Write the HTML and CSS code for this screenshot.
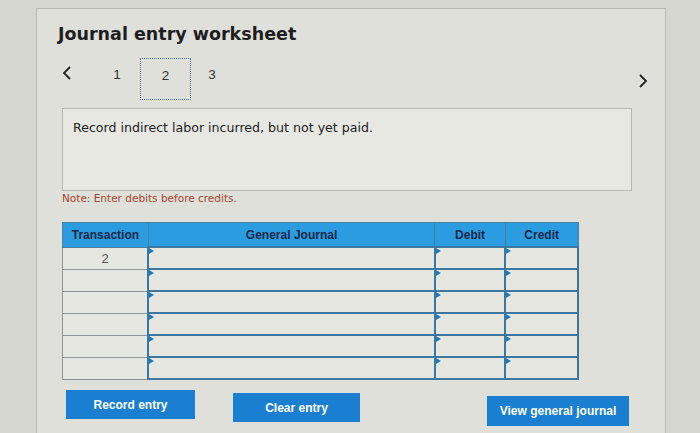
FILE: index.html
```html
<!DOCTYPE html>
<html>
<head>
<meta charset="utf-8">
<link rel="stylesheet" href="styles.css">
</head>
<body>
<div class="panel">
  <h1 class="title">Journal entry worksheet</h1>
  <div class="nav">
    <svg class="chev prev" width="10" height="14" viewBox="0 0 10 14"><polyline points="8,1 2,7 8,13" fill="none" stroke="#222" stroke-width="1.8"/></svg>
    <span class="step">1</span>
    <span class="step current">2</span>
    <span class="step">3</span>
    <svg class="chev next" width="10" height="14" viewBox="0 0 10 14"><polyline points="2,1 8,7 2,13" fill="none" stroke="#222" stroke-width="1.8"/></svg>
  </div>
  <div class="desc">Record indirect labor incurred, but not yet paid.</div>
  <div class="note">Note: Enter debits before credits.</div>
  <table class="journal">
    <thead>
      <tr><th class="c-tr">Transaction</th><th class="c-gj">General Journal</th><th class="c-db">Debit</th><th class="c-cr">Credit</th></tr>
    </thead>
    <tbody>
      <tr><td class="tr">2</td><td class="in"></td><td class="in"></td><td class="in"></td></tr>
      <tr><td class="tr"></td><td class="in"></td><td class="in"></td><td class="in"></td></tr>
      <tr><td class="tr"></td><td class="in"></td><td class="in"></td><td class="in"></td></tr>
      <tr><td class="tr"></td><td class="in"></td><td class="in"></td><td class="in"></td></tr>
      <tr><td class="tr"></td><td class="in"></td><td class="in"></td><td class="in"></td></tr>
      <tr><td class="tr"></td><td class="in"></td><td class="in"></td><td class="in"></td></tr>
    </tbody>
  </table>
  <div class="actions">
    <button class="btn b-record">Record entry</button>
    <button class="btn b-clear">Clear entry</button>
    <button class="btn b-view">View general journal</button>
  </div>
</div>
</body>
</html>
```
FILE: styles.css
```css
html, body {
  margin: 0;
  padding: 0;
  background: #d6d6d0;
  height: 100%;
  overflow: hidden;
}
body {
  font-family: "DejaVu Sans", Verdana, sans-serif;
  color: #222;
}
.panel {
  margin: 8px 0 0 36px;
  width: 630px;
  min-height: 440px;
  box-sizing: border-box;
  border: 1px solid #b9b9b3;
  border-bottom: none;
  background: #e0e0da;
  padding: 13px 0 0 25px;
}
.title {
  margin: 0 0 0 -4px;
  font-size: 17.5px;
  line-height: 24px;
  font-weight: bold;
  color: #1d1d22;
}
.nav {
  display: flex;
  align-items: flex-start;
  height: 43px;
  margin-top: 12px;
  width: 586px;
  font-family: "Liberation Sans", Arial, sans-serif;
  font-size: 13.5px;
  color: #333;
}
.chev { display: block; }
.chev.prev { margin-top: 8px; }
.chev.next { margin-left: auto; margin-top: 16px; }
.step {
  width: 30px;
  text-align: center;
  line-height: 34px;
}
.step:first-of-type { margin-left: 30px; }
.step.current {
  width: 49px;
  height: 40px;
  line-height: 34px;
  margin: 0 6px 0 8px;
  border: 1.5px dotted #4a6b95;
}
.desc {
  margin-top: 7px;
  width: 570px;
  height: 83px;
  box-sizing: border-box;
  border: 1px solid #b7b7b1;
  background: #e8e8e3;
  padding: 11px 10px;
  font-size: 12.6px;
  line-height: 16px;
  color: #222;
}
.note {
  font-size: 10.5px;
  line-height: 14px;
  color: #a2462f;
}
.journal {
  margin-top: 17px;
  border-collapse: collapse;
  width: 517px;
  font-family: "Liberation Sans", Arial, sans-serif;
}
.journal th {
  background: #2c9ce0;
  color: #17284a;
  font-weight: bold;
  font-size: 12px;
  height: 23px;
  padding: 0;
  border: 1px solid #4d7f9e;
}
.c-tr { width: 85px; }
.c-gj { width: 288px; }
.c-db { width: 70px; }
.c-cr { width: 72px; }
.journal td {
  height: 20px;
  padding: 0;
  background: #e7e7e2;
  position: relative;
}
.journal td.tr {
  border: 1px solid #8e9494;
  text-align: center;
  font-size: 13px;
  color: #555;
}
.journal td.in {
  border: 2px solid #3b77a0;
}
.journal td.in::before {
  content: "";
  position: absolute;
  left: 0;
  top: 0;
  border-top: 3px solid transparent;
  border-bottom: 3px solid transparent;
  border-left: 5px solid #1f78b8;
}
.actions {
  display: flex;
  align-items: flex-start;
  padding-left: 4px;
  margin-top: 10px;
}
.btn {
  border: none;
  background: #1a7fd0;
  color: #fff;
  font-family: "Liberation Sans", Arial, sans-serif;
  font-weight: bold;
  font-size: 12px;
  height: 29px;
  padding: 0;
}
.b-record { width: 129px; }
.b-clear { width: 127px; margin-left: 38px; margin-top: 3px; }
.b-view { width: 142px; margin-left: 127px; margin-top: 6px; height: 30px; }
```
